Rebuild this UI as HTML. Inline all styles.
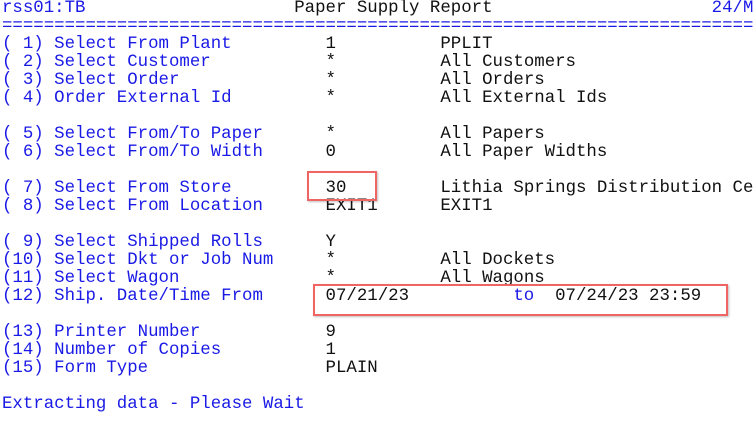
<!DOCTYPE html>
<html><head><meta charset="utf-8"><style>
html,body{margin:0;padding:0;background:#fff;width:755px;height:424px;overflow:hidden;position:relative}
pre{position:absolute;left:2px;top:0px;margin:0;width:753px;overflow:hidden;font-family:"Liberation Mono","DejaVu Sans Mono",monospace;font-size:17.4px;line-height:18px;color:#111;white-space:pre}
.b{color:#1a1ae6}
.box{position:absolute;border:2px solid #f06464;box-shadow:1px 1px 2px rgba(0,0,0,.25)}
</style></head><body>
<pre><span class="b">rss01:TB</span>                    Paper Supply Report                     <span class="b">24/M</span>
<span class="b">========================================================================</span>
<span class="b">( 1) Select From Plant</span>         1          PPLIT
<span class="b">( 2) Select Customer</span>           *          All Customers
<span class="b">( 3) Select Order</span>              *          All Orders
<span class="b">( 4) Order External Id</span>         *          All External Ids

<span class="b">( 5) Select From/To Paper</span>      *          All Papers
<span class="b">( 6) Select From/To Width</span>      0          All Paper Widths

<span class="b">( 7) Select From Store</span>         30         Lithia Springs Distribution Ce
<span class="b">( 8) Select From Location</span>      EXIT1      EXIT1

<span class="b">( 9) Select Shipped Rolls</span>      Y
<span class="b">(10) Select Dkt or Job Num</span>     *          All Dockets
<span class="b">(11) Select Wagon</span>              *          All Wagons
<span class="b">(12) Ship. Date/Time From</span>      07/21/23          <span class="b">to</span>  07/24/23 23:59

<span class="b">(13) Printer Number</span>            9
<span class="b">(14) Number of Copies</span>          1
<span class="b">(15) Form Type</span>                 PLAIN

<span class="b">Extracting data - Please Wait</span></pre>
<div class="box" style="left:307px;top:171px;width:66px;height:26px"></div>
<div class="box" style="left:313px;top:284px;width:411px;height:28px"></div>
</body></html>
